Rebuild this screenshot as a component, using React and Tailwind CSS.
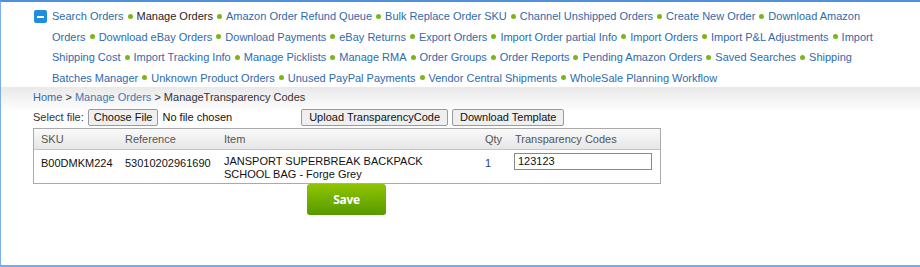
const links = [
  "Search Orders",
  "Manage Orders",
  "Amazon Order Refund Queue",
  "Bulk Replace Order SKU",
  "Channel Unshipped Orders",
  "Create New Order",
  "Download Amazon Orders",
  "Download eBay Orders",
  "Download Payments",
  "eBay Returns",
  "Export Orders",
  "Import Order partial Info",
  "Import Orders",
  "Import P&L Adjustments",
  "Import Shipping Cost",
  "Import Tracking Info",
  "Manage Picklists",
  "Manage RMA",
  "Order Groups",
  "Order Reports",
  "Pending Amazon Orders",
  "Saved Searches",
  "Shipping Batches Manager",
  "Unknown Product Orders",
  "Unused PayPal Payments",
  "Vendor Central Shipments",
  "WholeSale Planning Workflow",
];

const Bullet = () => (
  <span className="inline-block w-[5px] h-[5px] rounded-full bg-[#7cb518] mx-[4px] align-middle relative -top-[1px]" />
);

const Btn = ({ children, className = "" }) => (
  <span
    className={
      "inline-flex items-center h-[17px] px-[7px] border border-[#9a9a9a] rounded-[2px] bg-[#efefef] text-[#111] " +
      className
    }
  >
    {children}
  </span>
);

export default function App() {
  return (
    <div
      className="w-[920px] h-[267px] bg-white border-t-2 border-t-[#4f8fdc] border-l border-l-[#7aaef0] border-b-2 border-b-[#74a9ee] overflow-hidden text-[11px] text-[#333]"
      style={{ fontFamily: '"Liberation Sans", Arial, sans-serif' }}
    >
      <div className="flex pl-[33px] pt-[4px] h-[85px]">
        <span className="mt-[4px] w-[13px] h-[13px] rounded-[2px] bg-[#1e8fe0] flex items-center justify-center shrink-0">
          <span className="w-[7px] h-[2px] bg-white" />
        </span>
        <div className="ml-[5px] w-[830px] leading-[20.5px]">
          {links.map((l, i) => (
            <span key={l}>
              {i > 0 && <Bullet />}
              <span className={l === "Manage Orders" ? "text-[#222]" : "text-[#2f6aab]"}>{l}</span>
            </span>
          ))}
        </div>
      </div>

      <div className="bg-gradient-to-b from-[#e9e9e9] to-white to-[25px] pl-[32px] pt-[2px]">
        <div className="leading-[16px]">
          <span className="text-[#2f6aab]">Home</span>
          <span> &gt; </span>
          <span className="text-[#3f78b5]">Manage Orders</span>
          <span> &gt; ManageTransparency Codes</span>
        </div>

        <div className="flex items-center mt-[4px] h-[17px]">
          <span>Select file:</span>
          <Btn className="ml-[4px] !px-[5px]">Choose File</Btn>
          <span className="ml-[4px] text-[#111]">No file chosen</span>
          <Btn className="ml-[69px]">Upload TransparencyCode</Btn>
          <Btn className="ml-[4px]">Download Template</Btn>
        </div>

        <div className="mt-[2px] w-[628px] border border-[#aaa]">
          <div className="flex h-[21px] items-center bg-gradient-to-b from-[#fafafa] to-[#e6e6e6] border-b border-[#c4c4c4] text-[#555]">
            <span className="w-[91px] pl-[7px]">SKU</span>
            <span className="w-[99px]">Reference</span>
            <span className="w-[261px]">Item</span>
            <span className="w-[30px]">Qty</span>
            <span>Transparency Codes</span>
          </div>
          <div className="flex pt-[3px] h-[33px] text-[#111]">
            <span className="w-[91px] pl-[7px] pt-[2px]">B00DMKM224</span>
            <span className="w-[99px] pt-[2px]">53010202961690</span>
            <span className="w-[261px] pt-[2px] leading-[13px]">
              JANSPORT SUPERBREAK BACKPACK
              <br />
              SCHOOL BAG - Forge Grey
            </span>
            <span className="w-[29px] pt-[2px] text-[#1f3f73]">1</span>
            <span className="w-[138px] h-[17px] border border-[#8a8a8a] px-[3px] flex items-center">123123</span>
          </div>
        </div>

        <div className="ml-[274px] w-[79px] h-[31px] rounded-[3px] bg-gradient-to-b from-[#8fc400] to-[#569a00] flex items-center justify-center">
          <span
            className="text-white text-[12px] font-bold tracking-[-0.3px]"
            style={{ fontFamily: '"Open Sans", sans-serif' }}
          >
            Save
          </span>
        </div>
      </div>
    </div>
  );
}
